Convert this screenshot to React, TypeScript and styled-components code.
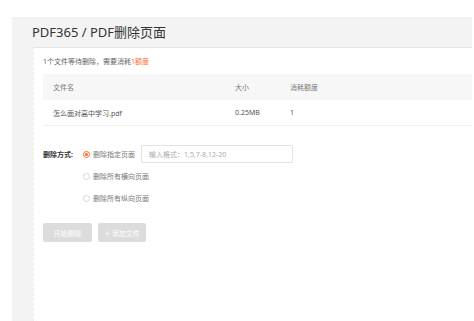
import styled, { createGlobalStyle } from "styled-components";

const GlobalStyle = createGlobalStyle`
  html, body {
    margin: 0;
    padding: 0;
    background: #fff;
  }
  body {
    font-family: "Noto Sans", "Noto Sans CJK SC", sans-serif;
    color: #333;
  }
`;

const Panel = styled.div`
  margin: 17px 0 0 12px;
  width: 460px;
  min-height: 304px;
  background: #f3f3f3;
  display: flex;
  flex-direction: column;
`;

const Title = styled.h1`
  margin: 0;
  height: 30px;
  padding-left: 20px;
  display: flex;
  align-items: center;
  font-size: 13px;
  font-weight: 400;
  color: #333;
  line-height: 1;
`;

const Card = styled.div`
  flex: 1;
  margin-left: 21px;
  background: #fff;
  border-top: 1px solid #e4e4e4;
  border-left: 1px dashed #ededed;
  padding: 9px 0 0 9px;
`;

const Notice = styled.div`
  font-size: 7px;
  line-height: 10px;
  color: #666;
  margin-bottom: 7px;
  span {
    color: #ff6a2a;
  }
`;

const Row = styled.div<{ $head?: boolean }>`
  display: grid;
  grid-template-columns: 182px 55px 1fr;
  align-items: center;
  padding-left: 10px;
  height: ${(p) => (p.$head ? "26px" : "25px")};
  background: ${(p) => (p.$head ? "#f7f7f7" : "#fff")};
  border-bottom: ${(p) => (p.$head ? "none" : "1px solid #efefef")};
  font-size: 7px;
  color: ${(p) => (p.$head ? "#777" : "#555")};
`;

const Options = styled.div`
  margin-top: 19px;
  display: grid;
  grid-template-columns: 40px 1fr;
  row-gap: 4px;
`;

const Label = styled.div`
  font-size: 7px;
  font-weight: 700;
  color: #333;
  height: 18px;
  display: flex;
  align-items: center;
`;

const OptionList = styled.div`
  display: flex;
  flex-direction: column;
  gap: 4px;
`;

const OptionRow = styled.label`
  display: flex;
  align-items: center;
  height: 18px;
  font-size: 7px;
  color: #777;
`;

const Radio = styled.span<{ $checked?: boolean }>`
  width: 7px;
  height: 7px;
  border-radius: 50%;
  box-sizing: border-box;
  border: 1px solid ${(p) => (p.$checked ? "#ff6a2a" : "#d6d6d6")};
  margin-right: 3px;
  display: flex;
  align-items: center;
  justify-content: center;
  &::after {
    content: "";
    width: 3px;
    height: 3px;
    border-radius: 50%;
    background: ${(p) => (p.$checked ? "#ff6a2a" : "transparent")};
  }
`;

const PageInput = styled.input`
  margin-left: 6px;
  width: 152px;
  height: 18px;
  box-sizing: border-box;
  border: 1px solid #e2e2e2;
  border-radius: 2px;
  padding: 0 7px;
  font-family: inherit;
  font-size: 7px;
  outline: none;
  &::placeholder {
    color: #aaa;
  }
`;

const Actions = styled.div`
  margin-top: 16px;
  display: flex;
  gap: 6px;
`;

const Button = styled.button<{ $w: number }>`
  width: ${(p) => p.$w}px;
  height: 19px;
  border: none;
  border-radius: 2px;
  background: #dcdcdc;
  color: #fff;
  font-family: inherit;
  font-size: 7px;
  padding: 0;
  display: flex;
  align-items: center;
  justify-content: center;
  gap: 2px;
  b {
    font-size: 10px;
    font-weight: 300;
    line-height: 1;
  }
`;

export default function App() {
  return (
    <>
      <GlobalStyle />
      <Panel>
        <Title>PDF365 / PDF删除页面</Title>
        <Card>
          <Notice>
            1个文件等待删除，需要消耗<span>1额度</span>
          </Notice>
          <Row $head>
            <div>文件名</div>
            <div>大小</div>
            <div>消耗额度</div>
          </Row>
          <Row>
            <div>怎么面对高中学习.pdf</div>
            <div>0.25MB</div>
            <div>1</div>
          </Row>
          <Options>
            <Label>删除方式:</Label>
            <OptionList>
              <OptionRow>
                <Radio $checked />
                删除指定页面
                <PageInput placeholder="输入格式：1,5,7-8,12-20" />
              </OptionRow>
              <OptionRow>
                <Radio />
                删除所有横向页面
              </OptionRow>
              <OptionRow>
                <Radio />
                删除所有纵向页面
              </OptionRow>
            </OptionList>
          </Options>
          <Actions>
            <Button $w={49}>开始删除</Button>
            <Button $w={48}>
              <b>+</b>添加文件
            </Button>
          </Actions>
        </Card>
      </Panel>
    </>
  );
}
